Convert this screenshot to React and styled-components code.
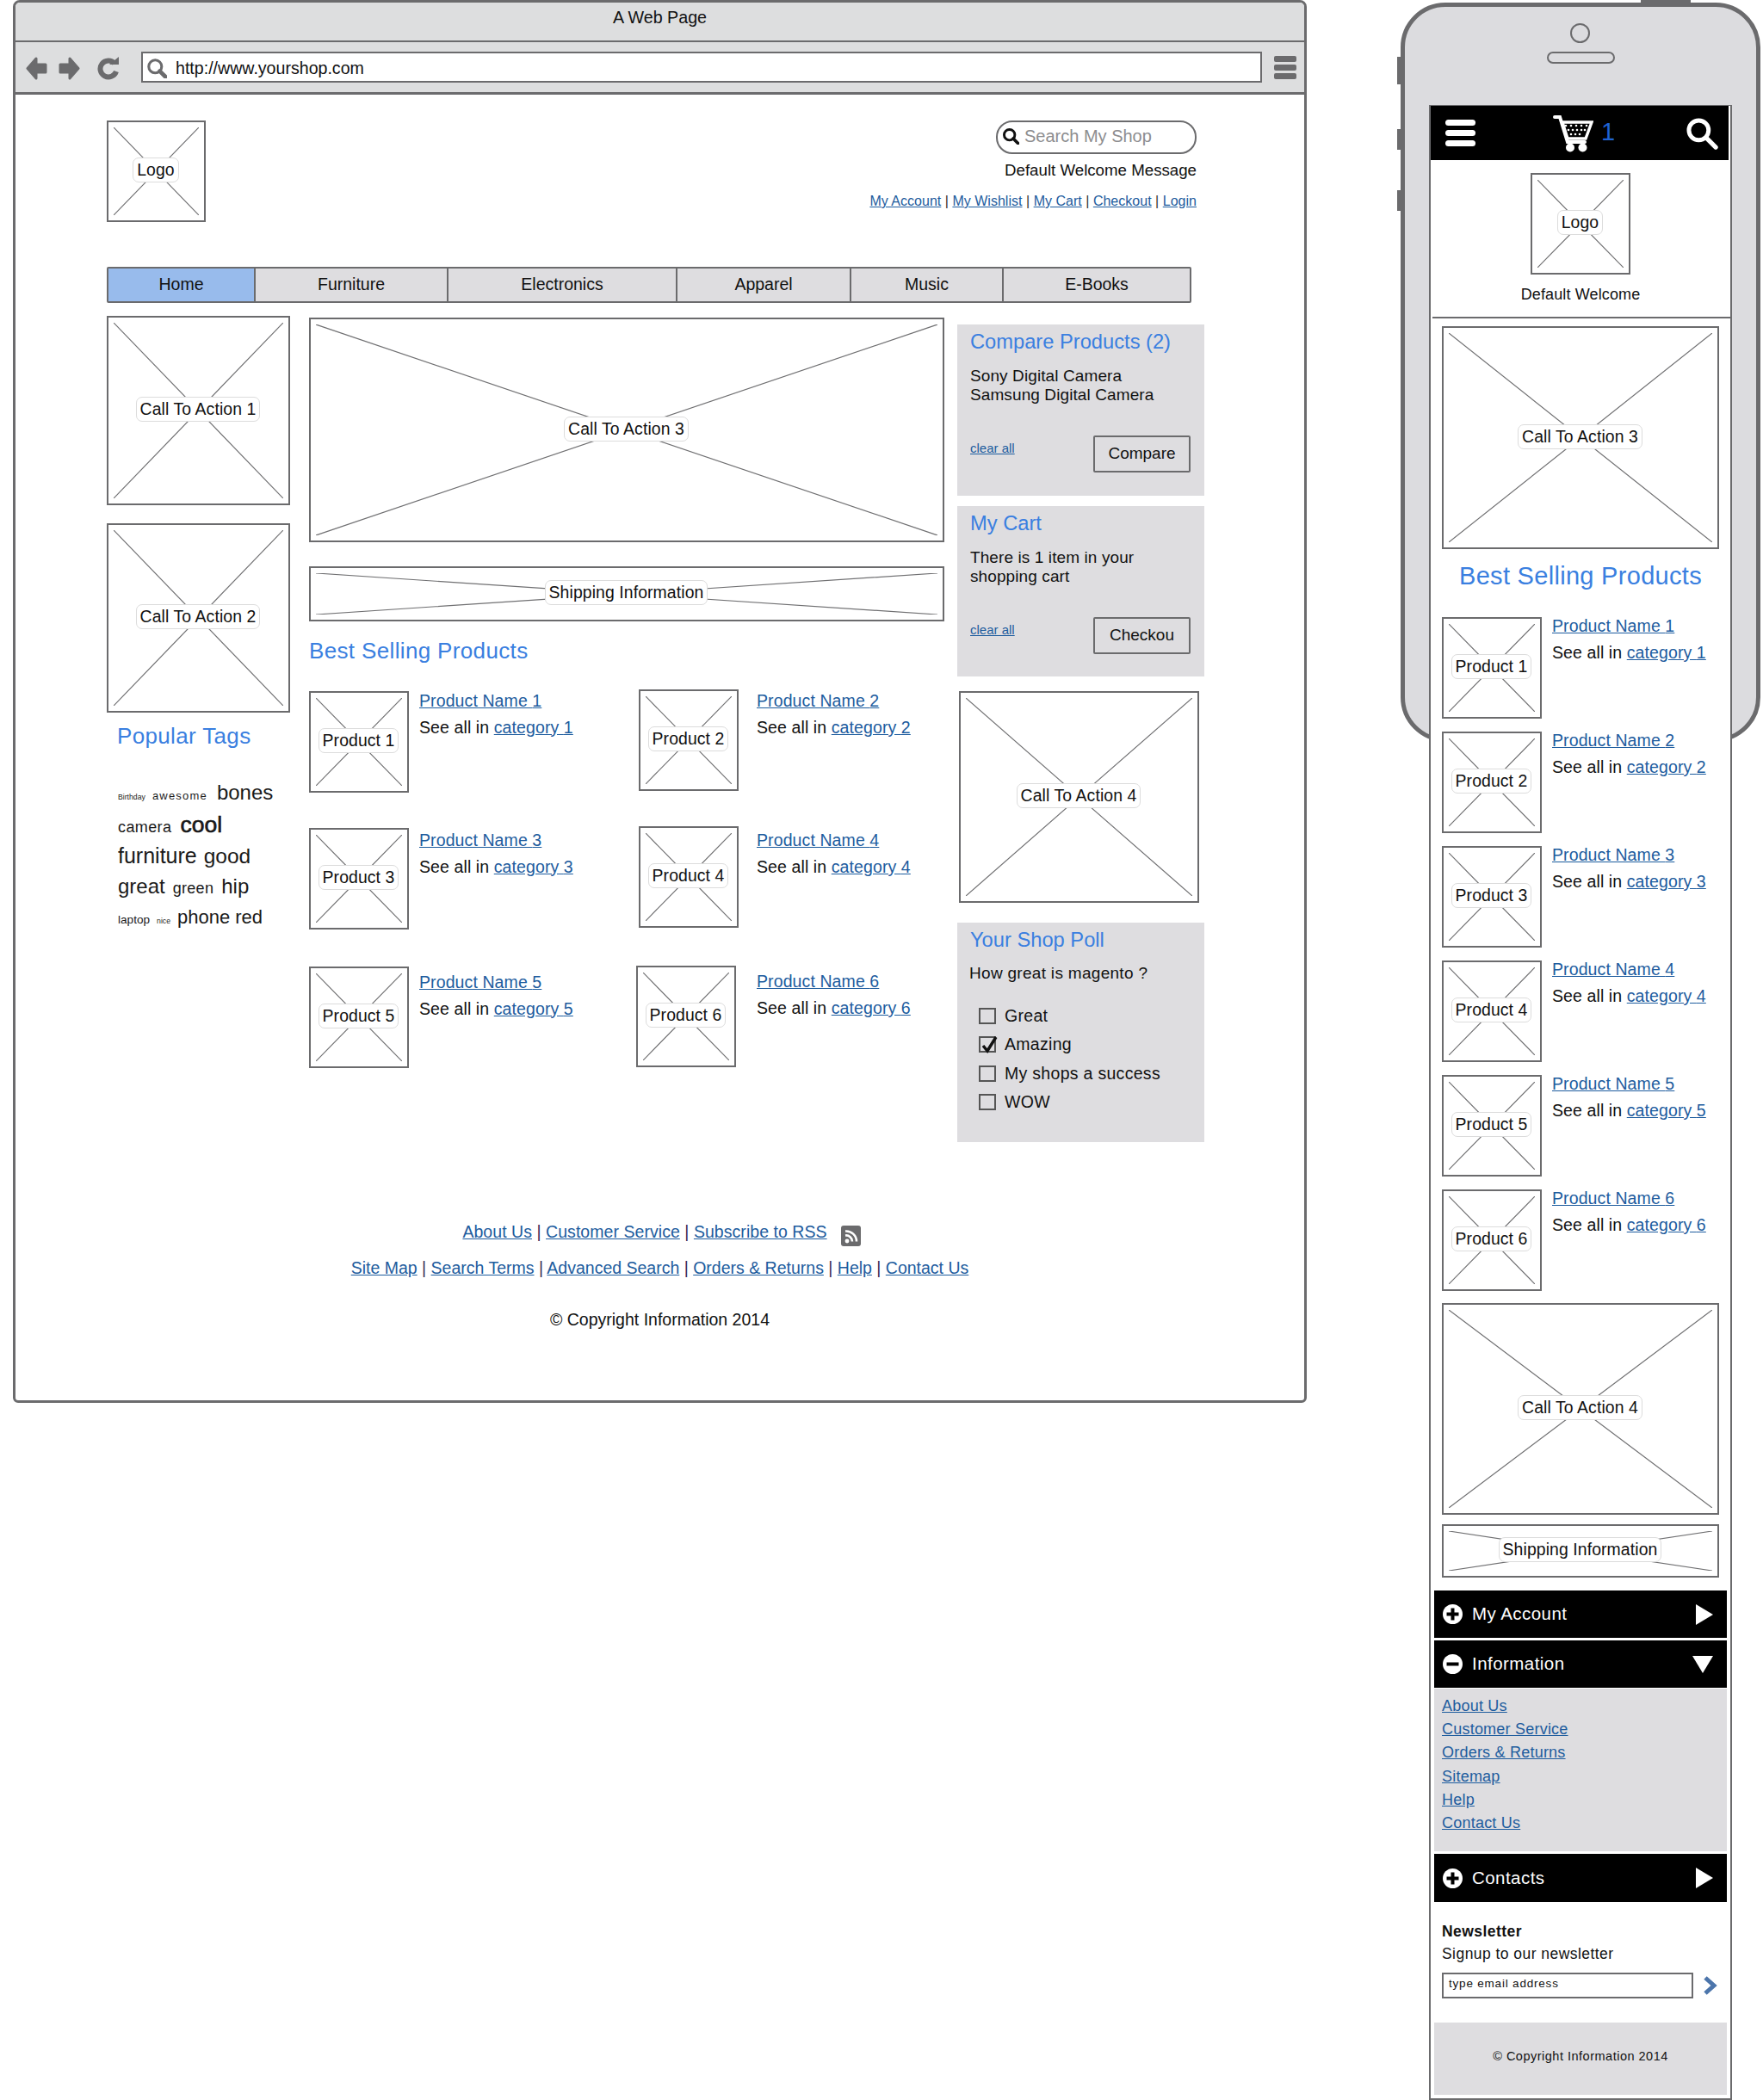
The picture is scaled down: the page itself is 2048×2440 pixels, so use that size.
import React from "react";
import styled, { createGlobalStyle } from "styled-components";

const Global = createGlobalStyle`
  html, body { margin: 0; padding: 0; background: #fff; }
  body { font-family: "Liberation Sans", Arial, sans-serif; color: #111; }
  * { box-sizing: border-box; }
`;

const LINK = "#1d5c9e";
const HEAD = "#3a7fe0";
const EDGE = "#6b6b6d";
const PANEL = "#dedde0";

const Page = styled.div`
  display: flex;
  align-items: flex-start;
  width: 2048px;
  height: 2440px;
  overflow: hidden;
  padding-left: 15px;
`;

/* ---------- browser chrome ---------- */
const Browser = styled.div`
  width: 1503px;
  height: 1630px;
  flex: none;
  border: 3px solid ${EDGE};
  border-radius: 8px 8px 6px 6px;
  background: #fff;
`;
const TitleBar = styled.div`
  height: 46px;
  background: #dddedf;
  border-bottom: 2px solid ${EDGE};
  border-radius: 5px 5px 0 0;
  text-align: center;
  font-size: 19.7px;
  line-height: 35px;
`;
const ToolBar = styled.div`
  height: 61px;
  display: flex;
  align-items: center;
  background: #dddedf;
  border-bottom: 3px solid ${EDGE};
  padding-left: 12px;
`;
const NavIcons = styled.div`
  width: 134px;
  flex: none;
  display: flex;
  align-items: center;
  gap: 13px;
  padding-top: 2px;
`;
const UrlBox = styled.div`
  width: 1302px;
  height: 36px;
  flex: none;
  display: flex;
  align-items: center;
  gap: 10px;
  padding: 2px 0 0 5px;
  background: #fff;
  border: 2px solid ${EDGE};
  font-size: 19.6px;
`;
const MenuIcon = styled.div`
  margin-left: 14px;
  width: 26px;
  display: flex;
  flex-direction: column;
  gap: 3px;
  span { display: block; height: 7px; border-radius: 2px; background: ${EDGE}; }
`;

/* ---------- wireframe placeholder ---------- */
const Box = styled.div`
  position: relative;
  flex: none;
  width: ${(p) => p.$w}px;
  height: ${(p) => p.$h}px;
  margin-top: ${(p) => p.$top || 0}px;
  margin-left: ${(p) => p.$left || 0}px;
  border: 2px solid ${EDGE};
  background: #fff;
  display: flex;
  align-items: center;
  justify-content: center;
`;
const Cross = styled.svg`
  position: absolute;
  top: 6px;
  left: 6px;
  width: calc(100% - 12px);
  height: calc(100% - 12px);
`;
const BoxLabel = styled.span`
  position: relative;
  margin: -3px 1px 0 0;
  padding: 0 4px;
  height: 29px;
  line-height: 27px;
  background: #fff;
  border: 1px solid #dcdcdc;
  border-radius: 7px;
  font-size: 19.4px;
  letter-spacing: 0.1px;
  white-space: nowrap;
`;
const Placeholder = ({ label, ...rest }) => (
  <Box {...rest}>
    <Cross viewBox="0 0 100 100" preserveAspectRatio="none">
      <path d="M0 0L100 100M100 0L0 100" stroke="#707072" strokeWidth="1.2" vectorEffect="non-scaling-stroke" fill="none" />
    </Cross>
    <BoxLabel>{label}</BoxLabel>
  </Box>
);

/* ---------- shop page ---------- */
const Content = styled.div`
  padding-left: 106px;
`;
const Header = styled.header`
  width: 1266px;
  padding-top: 30px;
  display: flex;
  justify-content: space-between;
`;
const HeaderRight = styled.div`
  display: flex;
  flex-direction: column;
  align-items: flex-end;
`;
const SearchPill = styled.div`
  width: 233px;
  height: 39px;
  display: flex;
  align-items: center;
  gap: 6px;
  padding: 0 0 2px 6px;
  border: 2px solid ${EDGE};
  border-radius: 19px;
  color: #8d8d8f;
  font-size: 20px;
`;
const Welcome = styled.div`
  margin-top: 4px;
  line-height: 30px;
  font-size: 18.7px;
`;
const TopLinks = styled.div`
  margin-top: 6px;
  line-height: 30px;
  font-size: 16px;
  letter-spacing: 0.02px;
  color: #333;
`;
const A = styled.a`
  color: ${LINK};
  text-decoration: underline;
`;

const Nav = styled.nav`
  margin-top: 52px;
  display: flex;
  height: 42px;
`;
const NavItem = styled.div`
  width: ${(p) => p.$w}px;
  flex: none;
  margin-left: ${(p) => (p.$first ? 0 : -2)}px;
  background: ${(p) => (p.$active ? "#98bbec" : PANEL)};
  border: 2px solid ${EDGE};
  border-radius: ${(p) => (p.$first ? "2px 0 0 2px" : p.$last ? "0 2px 2px 0" : "0")};
  text-align: center;
  font-size: 19.5px;
  line-height: 36px;
  padding-bottom: 4px;
`;

const Columns = styled.div`
  display: flex;
  align-items: flex-start;
  height: 975px;
`;
const LeftCol = styled.div`
  width: 212px;
  flex: none;
  padding-top: 15px;
`;
const CenterCol = styled.div`
  width: 738px;
  flex: none;
  margin-left: 23px;
  padding-top: 17px;
`;
const RightCol = styled.div`
  width: 287px;
  flex: none;
  margin-left: 15px;
  padding-top: 25px;
`;

const Heading = styled.h2`
  margin: ${(p) => p.$top || 0}px 0 0 ${(p) => p.$left || 0}px;
  font-weight: 400;
  font-size: 26px;
  line-height: 30px;
  letter-spacing: 0.35px;
  color: ${HEAD};
`;

const TagCloud = styled.div`
  margin: 36px 0 0 13px;
`;
const TagRow = styled.div`
  display: flex;
  align-items: baseline;
  height: ${(p) => p.$h}px;
  gap: ${(p) => p.$gap || 8}px;
`;
const Tag = styled.span`
  font-size: ${(p) => p.$s}px;
  letter-spacing: ${(p) => p.$ls || 0}px;
  line-height: 30px;
  margin-left: ${(p) => p.$left || 0}px;
  -webkit-text-stroke: ${(p) => (p.$heavy ? "0.6px #111" : "0")};
  color: #1a1a1a;
`;

const ProductRow = styled.div`
  display: flex;
  margin-top: ${(p) => p.$top}px;
`;
const ProductCard = styled.div`
  width: ${(p) => p.$w}px;
  flex: none;
  display: flex;
  align-items: flex-start;
`;
const ProductText = styled.div`
  margin-left: ${(p) => p.$left || 12}px;
  margin-top: ${(p) => p.$lift || 0}px;
  font-size: 19.5px;
  letter-spacing: 0.1px;
  line-height: 31px;
  white-space: nowrap;
`;

const Panel = styled.section`
  width: 287px;
  height: ${(p) => p.$h}px;
  margin-top: ${(p) => p.$top || 0}px;
  padding: 5px 16px 0 15px;
  background: ${PANEL};
`;
const PanelTitle = styled.h3`
  margin: 0;
  font-weight: 400;
  font-size: 23.7px;
  line-height: 30px;
  color: ${HEAD};
`;
const PanelBody = styled.p`
  margin: 14px 0 0;
  font-size: 19px;
  line-height: 22px;
  letter-spacing: 0.1px;
`;
const PanelFoot = styled.div`
  margin-top: 36px;
  display: flex;
  justify-content: space-between;
  align-items: flex-start;
`;
const ClearAll = styled(A)`
  margin-top: 7px;
  font-size: 15px;
  line-height: 16px;
`;
const Button = styled.div`
  width: 113px;
  height: 43px;
  background: ${PANEL};
  border: 2px solid ${EDGE};
  border-radius: 2px;
  text-align: center;
  font-size: 19px;
  line-height: 37px;
  overflow: hidden;
`;
const Question = styled.p`
  margin: 12px 0 0 -1px;
  font-size: 19px;
  line-height: 24px;
  letter-spacing: 0.3px;
`;
const PollList = styled.div`
  margin: 21px 0 0 10px;
  display: flex;
  flex-direction: column;
`;
const PollOption = styled.div`
  display: flex;
  align-items: center;
  height: 33.3px;
  gap: 10px;
  font-size: 19.5px;
  letter-spacing: 0.3px;
`;
const CheckBox = styled.span`
  position: relative;
  flex: none;
  width: 20px;
  height: 19px;
  border: 2px solid #555;
  background: ${PANEL};
  svg { position: absolute; left: 0; top: -4px; }
`;

const Footer = styled.footer`
  margin: 83px 0 0 -106px;
  text-align: center;
  font-size: 19.5px;
  line-height: 42px;
  color: #3a2a55;
`;
const FootLine = styled.div`
  display: flex;
  justify-content: center;
  gap: 5px;
  white-space: pre;
  padding-left: ${(p) => p.$pad || 0}px;
  letter-spacing: ${(p) => p.$ls || 0}px;
`;
const Copy = styled.div`
  margin-top: 18px;
  color: #111;
`;
const RssBadge = styled.svg`
  margin: 14px 0 0 11px;
`;

/* ---------- phone ---------- */
const Phone = styled.div`
  position: relative;
  width: 418px;
  height: 859px;
  margin: 3px 0 0 109px;
  flex: none;
  padding: 114px 0 0 28px;
  border: 5px solid ${EDGE};
  border-radius: 52px;
  background: #dcdcdf;
`;
const SideKey = styled.span`
  position: absolute;
  left: -9px;
  top: ${(p) => p.$y}px;
  width: 4px;
  height: ${(p) => p.$h}px;
  background: ${EDGE};
`;
const TopKey = styled.span`
  position: absolute;
  left: 274px;
  top: -8px;
  width: 58px;
  height: 4px;
  background: ${EDGE};
`;
const Camera = styled.span`
  position: absolute;
  left: 192px;
  top: 19px;
  width: 23px;
  height: 23px;
  border: 2px solid ${EDGE};
  border-radius: 50%;
`;
const Speaker = styled.span`
  position: absolute;
  left: 165px;
  top: 52px;
  width: 79px;
  height: 14px;
  border: 2px solid ${EDGE};
  border-radius: 7px;
`;
const Screen = styled.div`
  width: 352px;
  height: 2318px;
  background: #fff;
  border: 2px solid ${EDGE};
  border-top-width: 1px;
`;
const MobileBar = styled.div`
  width: 346px;
  height: 63px;
  background: #000;
  display: flex;
  align-items: center;
  padding: 0 12px 0 17px;
`;
const Burger = styled.div`
  width: 35px;
  display: flex;
  flex-direction: column;
  gap: 5px;
  span { display: block; height: 7px; border-radius: 4px; background: #fff; }
`;
const CartWrap = styled.div`
  margin-left: 90px;
  display: flex;
  align-items: center;
  gap: 9px;
  flex: 1;
`;
const CartCount = styled.span`
  color: #1f63d2;
  font-size: 29px;
  line-height: 1;
  margin-top: -2px;
`;
const CenterBlock = styled.div`
  display: flex;
  flex-direction: column;
  align-items: center;
`;
const MobileWelcome = styled.div`
  margin-top: 11px;
  line-height: 24px;
  font-size: 18px;
  letter-spacing: 0.12px;
`;
const Divider = styled.hr`
  width: 346px;
  margin: 14px 0 0 2px;
  border: 0;
  border-top: 2px solid ${EDGE};
`;
const MobileHeading = styled(Heading)`
  margin-top: 13px;
  text-align: center;
  font-size: 29px;
  line-height: 36px;
  letter-spacing: 0.3px;
`;
const MobileList = styled.div`
  margin: 30px 0 0 13px;
  display: flex;
  flex-direction: column;
  gap: 15px;
`;
const MobileProduct = styled.div`
  display: flex;
  align-items: flex-start;
`;
const AccordionBar = styled.div`
  width: 340px;
  height: ${(p) => p.$h || 55}px;
  margin: ${(p) => p.$top}px 0 0 4px;
  background: #000;
  color: #fff;
  display: flex;
  align-items: center;
  padding: 0 16px 0 10px;
  gap: 11px;
  font-size: 20.5px;
  letter-spacing: 0.45px;
  span { flex: 1; margin-top: -1px; }
`;
const AccordionBody = styled.div`
  width: 340px;
  height: 189px;
  margin: 1px 0 0 4px;
  padding: 7px 0 0 9px;
  background: ${PANEL};
  display: flex;
  flex-direction: column;
  align-items: flex-start;
  font-size: 18px;
  line-height: 27.2px;
  letter-spacing: 0.22px;
`;
const Newsletter = styled.div`
  margin: 21px 0 0 13px;
  font-size: 17.5px;
  line-height: 26px;
  letter-spacing: 0.45px;
  strong { display: block; font-weight: 700; }
`;
const EmailRow = styled.div`
  margin-top: 9px;
  display: flex;
  align-items: center;
  gap: 11px;
`;
const EmailBox = styled.div`
  width: 292px;
  height: 30px;
  border: 2px solid ${EDGE};
  padding-left: 6px;
  font-size: 13.5px;
  line-height: 22px;
  letter-spacing: 0.8px;
`;
const MobileFoot = styled.div`
  width: 340px;
  height: 84px;
  margin: 28px 0 0 4px;
  background: ${PANEL};
  text-align: center;
  font-size: 14.5px;
  line-height: 78px;
  letter-spacing: 0.5px;
`;

/* ---------- icons ---------- */
const Arrow = ({ flip }) => (
  <svg width="25" height="27" viewBox="0 0 25 27" style={flip ? { transform: "scaleX(-1)" } : undefined}>
    <path d="M12 2L2 13.5L12 25V18H23V9H12Z" fill={EDGE} stroke={EDGE} strokeWidth="3" strokeLinejoin="round" />
  </svg>
);
const ReloadSvg = styled.svg`
  margin-left: 7px;
`;
const Reload = () => (
  <ReloadSvg width="26" height="27" viewBox="0 0 26 27">
    <path d="M20 7.5A9.5 9.5 0 1 0 22 17" stroke={EDGE} strokeWidth="6" fill="none" />
    <path d="M14 9H25V0Z" fill={EDGE} />
  </ReloadSvg>
);
const Lens = ({ size = 26, color = EDGE, sw = 3.5, handle = 5.5, r = 8.5 }) => (
  <svg width={size} height={size} viewBox="0 0 26 26">
    <circle cx="10.5" cy="10.5" r={r} stroke={color} strokeWidth={sw} fill="none" />
    <path d="M16.5 16.5L24 24" stroke={color} strokeWidth={handle} strokeLinecap="round" />
  </svg>
);
const Cart = () => (
  <svg width="47" height="44" viewBox="0 0 47 44">
    <path d="M2 3H8L17 32H37" stroke="#fff" strokeWidth="4" strokeLinecap="round" fill="none" />
    <path d="M11 9L45 9L38 28H17Z" stroke="#fff" strokeWidth="3.4" fill="none" />
    <g fill="#fff">
      {[15, 21, 27, 33, 39].map((x) => <circle key={x} cx={x} cy="13" r="1.3" />)}
      {[18, 23, 28, 33, 37].map((x) => <circle key={x} cx={x} cy="18" r="1.3" />)}
      {[21, 26, 31].map((x) => <circle key={x} cx={x} cy="23" r="1.3" />)}
      <circle cx="20" cy="38.5" r="5" />
      <circle cx="34.5" cy="38.5" r="5" />
    </g>
  </svg>
);
const RoundSign = ({ plus }) => (
  <svg width="23" height="23" viewBox="0 0 23 23">
    <circle cx="11.5" cy="11.5" r="11.5" fill="#fff" />
    <path d="M4.5 11.5H18.5" stroke="#000" strokeWidth="4" />
    {plus && <path d="M11.5 4.5V18.5" stroke="#000" strokeWidth="4" />}
  </svg>
);
const TriRight = () => (
  <svg width="20" height="24" viewBox="0 0 20 24"><path d="M0 0L20 12L0 24Z" fill="#fff" /></svg>
);
const TriDown = () => (
  <svg width="24" height="20" viewBox="0 0 24 20"><path d="M0 0H24L12 20Z" fill="#fff" /></svg>
);
const Rss = () => (
  <RssBadge width="23" height="24" viewBox="0 0 23 24">
    <rect width="23" height="24" rx="3" fill={EDGE} />
    <circle cx="7" cy="18" r="2.4" fill="#fff" />
    <path d="M5 11.5A7 7 0 0 1 13 18.5M5 6.5A12 12 0 0 1 18 18.5" stroke="#fff" strokeWidth="2.6" fill="none" />
  </RssBadge>
);
const Chevron = () => (
  <svg width="17" height="22" viewBox="0 0 17 22">
    <path d="M3 2L13 11L3 20" stroke="#4c75ab" strokeWidth="5" fill="none" />
  </svg>
);

/* ---------- composite bits ---------- */
const rows = [
  { n: 1, top: 32, nudge: -2, shift: 0, liftA: -4.5, liftB: -4 },
  { n: 3, top: 41, nudge: -2, shift: 0, liftA: -1.5, liftB: -1 },
  { n: 5, top: 43, nudge: -1, shift: -3, liftA: 2.5, liftB: 2 },
];
const Card = ({ n, nudge = 0, left = 12, lift = 0, xnudge = 0, w }) => (
  <ProductCard $w={w}>
    <Placeholder label={`Product ${n}`} $w={116} $h={118} $top={nudge} $left={xnudge} />
    <ProductText $left={left} $lift={lift}>
      <A>Product Name {n}</A>
      <div>See all in <A>category {n}</A></div>
    </ProductText>
  </ProductCard>
);

const App = () => (
  <Page>
    <Global />
    <Browser>
      <TitleBar>A Web Page</TitleBar>
      <ToolBar>
        <NavIcons>
          <Arrow />
          <Arrow flip />
          <Reload />
        </NavIcons>
        <UrlBox>
          <Lens size={23} />
          <span>http://www.yourshop.com</span>
        </UrlBox>
        <MenuIcon><span /><span /><span /></MenuIcon>
      </ToolBar>
      <Content>
        <Header>
          <Placeholder label="Logo" $w={115} $h={118} />
          <HeaderRight>
            <SearchPill>
              <Lens size={19} color="#111" sw={4} handle={5} />
              <span>Search My Shop</span>
            </SearchPill>
            <Welcome>Default Welcome Message</Welcome>
            <TopLinks>
              <A>My Account</A> | <A>My Wishlist</A> | <A>My Cart</A> | <A>Checkout</A> | <A>Login</A>
            </TopLinks>
          </HeaderRight>
        </Header>
        <Nav>
          <NavItem $first $active $w={173}>Home</NavItem>
          <NavItem $w={226}>Furniture</NavItem>
          <NavItem $w={268}>Electronics</NavItem>
          <NavItem $w={204}>Apparel</NavItem>
          <NavItem $w={179}>Music</NavItem>
          <NavItem $last $w={220}>E-Books</NavItem>
        </Nav>
        <Columns>
          <LeftCol>
            <Placeholder label="Call To Action 1" $w={213} $h={220} />
            <Placeholder label="Call To Action 2" $w={213} $h={220} $top={21} />
            <Heading $top={12} $left={12}>Popular Tags</Heading>
            <TagCloud>
              <TagRow $h={37}>
                <Tag $s={8.7}>Birthday</Tag>
                <Tag $s={13} $ls={1.2}>awesome</Tag>
                <Tag $s={24} $left={3}>bones</Tag>
              </TagRow>
              <TagRow $h={36} $gap={10}>
                <Tag $s={18} $ls={0.4}>camera</Tag>
                <Tag $s={26.5} $heavy>cool</Tag>
              </TagRow>
              <TagRow $h={36}>
                <Tag $s={25}>furniture</Tag>
                <Tag $s={24.5}>good</Tag>
              </TagRow>
              <TagRow $h={36} $gap={9}>
                <Tag $s={24}>great</Tag>
                <Tag $s={18} $ls={0.3}>green</Tag>
                <Tag $s={24}>hip</Tag>
              </TagRow>
              <TagRow $h={36} $gap={8}>
                <Tag $s={13.6}>laptop</Tag>
                <Tag $s={8.7}>nice</Tag>
                <Tag $s={22}>phone red</Tag>
              </TagRow>
            </TagCloud>
          </LeftCol>
          <CenterCol>
            <Placeholder label="Call To Action 3" $w={738} $h={261} />
            <Placeholder label="Shipping Information" $w={738} $h={64} $top={28} />
            <Heading $top={19}>Best Selling Products</Heading>
            {rows.map((r) => (
              <ProductRow key={r.n} $top={r.top}>
                <Card n={r.n} w={383} lift={r.liftA} />
                <Card n={r.n + 1} nudge={r.nudge} xnudge={r.shift} w={340} left={r.shift ? 24 : 21} lift={r.liftB} />
              </ProductRow>
            ))}
          </CenterCol>
          <RightCol>
            <Panel $h={199}>
              <PanelTitle>Compare Products (2)</PanelTitle>
              <PanelBody>Sony Digital Camera<br />Samsung Digital Camera</PanelBody>
              <PanelFoot>
                <ClearAll>clear all</ClearAll>
                <Button>Compare</Button>
              </PanelFoot>
            </Panel>
            <Panel $h={198} $top={12}>
              <PanelTitle>My Cart</PanelTitle>
              <PanelBody>There is 1 item in your<br />shopping cart</PanelBody>
              <PanelFoot>
                <ClearAll>clear all</ClearAll>
                <Button>Checkou</Button>
              </PanelFoot>
            </Panel>
            <Placeholder label="Call To Action 4" $w={279} $h={246} $top={17} $left={2} />
            <Panel $h={255} $top={23}>
              <PanelTitle>Your Shop Poll</PanelTitle>
              <Question>How great is magento ?</Question>
              <PollList>
                <PollOption><CheckBox />Great</PollOption>
                <PollOption>
                  <CheckBox>
                    <svg width="20" height="22" viewBox="0 0 20 22"><path d="M3 13L8 19L18 3" stroke="#111" strokeWidth="3.4" fill="none" /></svg>
                  </CheckBox>
                  Amazing
                </PollOption>
                <PollOption><CheckBox />My shops a success</PollOption>
                <PollOption><CheckBox />WOW</PollOption>
              </PollList>
            </Panel>
          </RightCol>
        </Columns>
        <Footer>
          <FootLine $pad={4} $ls={0.05}>
            <span><A>About Us</A> | <A>Customer Service</A> | <A>Subscribe to RSS</A></span>
            <Rss />
          </FootLine>
          <FootLine>
            <span><A>Site Map</A> | <A>Search Terms</A> | <A>Advanced Search</A> | <A>Orders &amp; Returns</A> | <A>Help</A> | <A>Contact Us</A></span>
          </FootLine>
          <Copy>© Copyright Information 2014</Copy>
        </Footer>
      </Content>
    </Browser>
    <Phone>
      <TopKey />
      <SideKey $y={58} $h={32} />
      <SideKey $y={142} $h={24} />
      <SideKey $y={213} $h={24} />
      <Camera />
      <Speaker />
      <Screen>
        <MobileBar>
          <Burger><span /><span /><span /></Burger>
          <CartWrap><Cart /><CartCount>1</CartCount></CartWrap>
          <Lens size={38} color="#fff" sw={3.4} handle={3.6} r={7.8} />
        </MobileBar>
        <CenterBlock>
          <Placeholder label="Logo" $w={116} $h={118} $top={15} />
          <MobileWelcome>Default Welcome</MobileWelcome>
        </CenterBlock>
        <Divider />
        <Placeholder label="Call To Action 3" $w={322} $h={259} $top={9} $left={13} />
        <MobileHeading>Best Selling Products</MobileHeading>
        <MobileList>
          {[1, 2, 3, 4, 5, 6].map((n) => (
            <MobileProduct key={n}>
              <Placeholder label={`Product ${n}`} $w={116} $h={118} />
              <ProductText $left={12} $lift={-5}>
                <A>Product Name {n}</A>
                <div>See all in <A>category {n}</A></div>
              </ProductText>
            </MobileProduct>
          ))}
        </MobileList>
        <Placeholder label="Call To Action 4" $w={322} $h={246} $top={14} $left={13} />
        <Placeholder label="Shipping Information" $w={322} $h={62} $top={11} $left={13} />
        <AccordionBar $top={15}><RoundSign plus /><span>My Account</span><TriRight /></AccordionBar>
        <AccordionBar $top={3}><RoundSign /><span>Information</span><TriDown /></AccordionBar>
        <AccordionBody>
          <A>About Us</A>
          <A>Customer Service</A>
          <A>Orders &amp; Returns</A>
          <A>Sitemap</A>
          <A>Help</A>
          <A>Contact Us</A>
        </AccordionBody>
        <AccordionBar $top={3} $h={56}><RoundSign plus /><span>Contacts</span><TriRight /></AccordionBar>
        <Newsletter>
          <strong>Newsletter</strong>
          Signup to our newsletter
          <EmailRow>
            <EmailBox>type email address</EmailBox>
            <Chevron />
          </EmailRow>
        </Newsletter>
        <MobileFoot>© Copyright Information 2014</MobileFoot>
      </Screen>
    </Phone>
  </Page>
);

export default App;
